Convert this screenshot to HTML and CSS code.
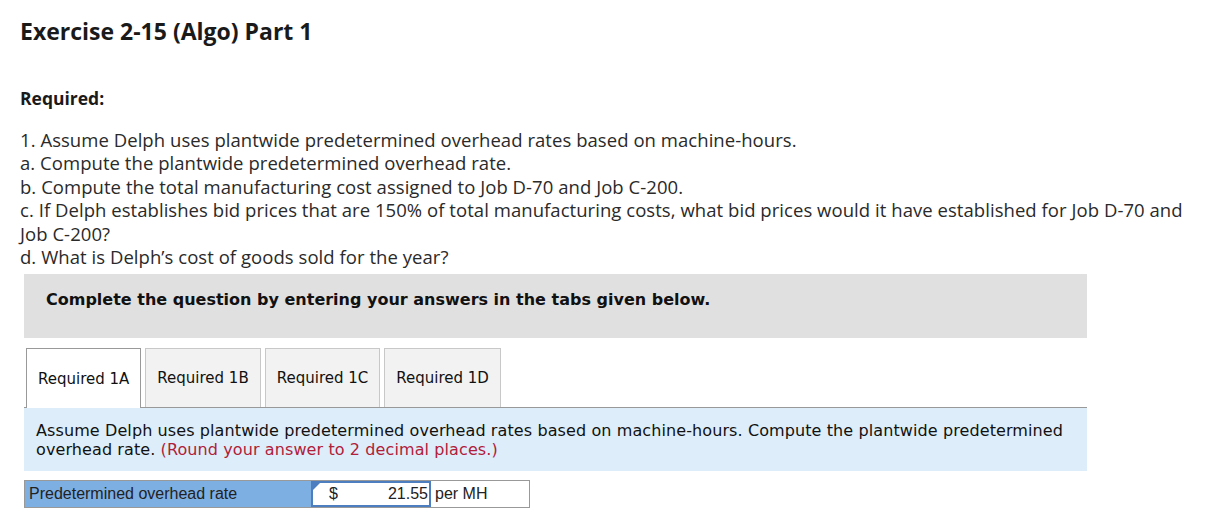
FILE: index.html
```html
<!DOCTYPE html>
<html>
<head>
<meta charset="utf-8">
<link rel="stylesheet" href="styles.css">
</head>
<body>
<div class="page">
  <h1 class="title">Exercise 2-15 (Algo) Part 1</h1>
  <h2 class="req">Required:</h2>
  <div class="questions">
    <p>1. Assume Delph uses plantwide predetermined overhead rates based on machine-hours.</p>
    <p>a. Compute the plantwide predetermined overhead rate.</p>
    <p>b. Compute the total manufacturing cost assigned to Job D-70 and Job C-200.</p>
    <p>c. If Delph establishes bid prices that are 150% of total manufacturing costs, what bid prices would it have established for Job D-70 and Job C-200?</p>
    <p>d. What is Delph’s cost of goods sold for the year?</p>
  </div>
  <div class="notice">Complete the question by entering your answers in the tabs given below.</div>
  <div class="tabs">
    <div class="tab active">Required 1A</div>
    <div class="tab">Required 1B</div>
    <div class="tab">Required 1C</div>
    <div class="tab">Required 1D</div>
  </div>
  <div class="panel">Assume Delph uses plantwide predetermined overhead rates based on machine-hours. Compute the plantwide predetermined overhead rate. <span class="hint">(Round your answer to 2 decimal places.)</span></div>
  <div class="answer">
    <div class="label">Predetermined overhead rate</div>
    <div class="input"><span class="flag"></span><span class="dollar">$</span><span class="value">21.55</span></div>
    <div class="unit">per MH</div>
  </div>
</div>
</body>
</html>
```
FILE: styles.css
```css
html, body { margin: 0; padding: 0; background: #fff; }
.page { padding: 0 6px 0 20px; font-family: "Open Sans", Lato, sans-serif; color: #222; }
.title { margin: 0; padding-top: 16px; font-size: 23px; line-height: 30px; font-weight: 700; color: #1a1a1a; }
.req { margin: 0; padding-top: 40px; font-size: 17.5px; line-height: 24px; font-weight: 700; color: #1a1a1a; }
.questions { padding-top: 18px; font-size: 18.5px; line-height: 23.4px; color: #2a2a2a; letter-spacing: 0.05px; }
.questions p { margin: 0; }
.notice { margin: 6px 0 0 4px; width: 1063px; height: 64px; box-sizing: border-box; background: #e0e0e0; padding: 16px 22px; font-family: Verdana, "DejaVu Sans", sans-serif; font-weight: 700; font-size: 16px; line-height: 20px; color: #111; }
.tabs { display: flex; gap: 4px; margin: 10px 0 0 6px; position: relative; z-index: 1; }
.tab { height: 59px; box-sizing: border-box; border: 1px solid #c8c8c8; border-bottom: none; background: #f2f2f2; padding: 0 11px; display: flex; align-items: center; font-family: Verdana, "DejaVu Sans", sans-serif; font-size: 15px; color: #111; }
.tab.active { background: #fff; border-color: #999; height: 60px; margin-bottom: -1px; }
.panel { margin-left: 4px; width: 1063px; box-sizing: border-box; border-top: 1px solid #999; background: #ddedf9; padding: 13px 12px 12px; font-family: Verdana, "DejaVu Sans", sans-serif; font-size: 16px; line-height: 19px; color: #111; letter-spacing: 0.1px; }
.hint { color: #b0203a; }
.answer { display: flex; margin: 9px 0 0 4px; width: 506px; height: 28px; box-sizing: border-box; border: 1px solid #999; font-family: Arial, "Liberation Sans", sans-serif; font-size: 16px; color: #222; }
.label { width: 286px; background: #7eafe3; padding-left: 4px; display: flex; align-items: center; box-sizing: border-box; }
.input { position: relative; width: 120px; box-sizing: border-box; border: 2px solid #4d7fc0; background: #fff; display: flex; align-items: center; justify-content: space-between; padding: 0 1px 0 16px; }
.flag { position: absolute; left: 0; top: 0; width: 0; height: 0; border-top: 7px solid #4d7fc0; border-right: 7px solid transparent; }
.unit { flex: 1; display: flex; align-items: center; padding-left: 4px; }
```
